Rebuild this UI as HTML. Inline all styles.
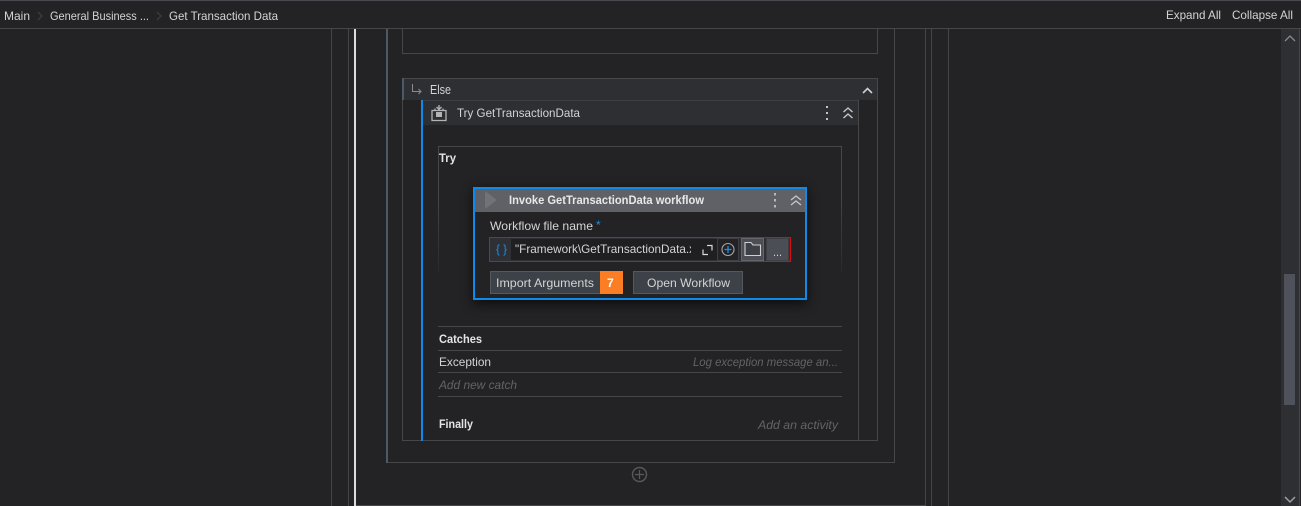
<!DOCTYPE html>
<html><head><meta charset="utf-8"><style>
html,body{margin:0;padding:0;background:#232325;width:1301px;height:506px;overflow:hidden}
svg{display:block}
text{font-family:"Liberation Sans",sans-serif;font-size:12px;fill:#d4d4d4}
.b{font-weight:bold;fill:#e4e4e4}
.i{font-style:italic;fill:#636366}
</style></head><body>
<svg width="1301" height="506" viewBox="0 0 1301 506" xmlns="http://www.w3.org/2000/svg">
<defs>
<linearGradient id="fl" x1="0" y1="146" x2="0" y2="272" gradientUnits="userSpaceOnUse"><stop offset="0" stop-color="#47474a"/><stop offset=".4" stop-color="#47474a"/><stop offset="1" stop-color="#29292b"/></linearGradient>
<filter id="sh" x="-10%" y="-20%" width="120%" height="140%"><feGaussianBlur stdDeviation="6"/></filter>
</defs>
<rect width="1301" height="506" fill="#232325"/>
<!-- top bar -->
<rect y="0" width="1301" height="1" fill="#494a4f"/>
<rect y="28" width="1301" height="1" fill="#47474a"/>
<text x="4" y="20" textLength="26" lengthAdjust="spacingAndGlyphs">Main</text>
<path d="M38 12l4 4-4 4" fill="none" stroke="#3a3a3d" stroke-width="1.5"/>
<text x="50" y="20" textLength="99" lengthAdjust="spacingAndGlyphs">General Business ...</text>
<path d="M157 12l4 4-4 4" fill="none" stroke="#3a3a3d" stroke-width="1.5"/>
<text x="169" y="20" textLength="109" lengthAdjust="spacingAndGlyphs">Get Transaction Data</text>
<text x="1166" y="19" textLength="55" lengthAdjust="spacingAndGlyphs">Expand All</text>
<text x="1232" y="19" textLength="61" lengthAdjust="spacingAndGlyphs">Collapse All</text>
<!-- scrollbar -->
<rect x="1281" y="29" width="18" height="477" fill="#2e2f33"/>
<rect x="1299" y="29" width="1" height="477" fill="#47474a"/>
<rect x="1284" y="274" width="11" height="131" fill="#4f525a"/>
<path d="M1285 41l5-5 5 5" fill="none" stroke="#8a8a8c" stroke-width="1.3"/>
<path d="M1285 497l5 5 5-5" fill="none" stroke="#a0a0a2" stroke-width="1.5"/>
<!-- vertical rails -->
<rect x="331" y="29" width="1" height="477" fill="#454547"/>
<rect x="348" y="29" width="1" height="477" fill="#454547"/>
<rect x="354" y="29" width="2" height="477" fill="#dcdcdc"/>
<rect x="386" y="29" width="2" height="434" fill="#4a5a68"/>
<rect x="388" y="462" width="507" height="1" fill="#47474a"/>
<rect x="894" y="29" width="1" height="434" fill="#47474a"/>
<rect x="925" y="29" width="1" height="477" fill="#454547"/>
<rect x="931" y="29" width="1" height="477" fill="#454547"/>
<rect x="948" y="29" width="1" height="477" fill="#454547"/>
<rect x="356" y="505" width="570" height="1" fill="#4a4a4c"/>
<!-- upper box -->
<rect x="402" y="29" width="1" height="25" fill="#47474a"/>
<rect x="877" y="29" width="1" height="25" fill="#47474a"/>
<rect x="402" y="53" width="476" height="1" fill="#47474a"/>
<!-- else -->
<rect x="402" y="78" width="476" height="22" fill="#2e2f33"/>
<rect x="402" y="78" width="476" height="1" fill="#47474a"/>
<rect x="402" y="78" width="2" height="22" fill="#4a5a68"/>
<rect x="402" y="100" width="1" height="341" fill="#47474a"/>
<rect x="877" y="78" width="1" height="363" fill="#47474a"/>
<rect x="402" y="440" width="476" height="1" fill="#47474a"/>
<path d="M412.5 84v7.5h8M418.5 89l2.5 2.500-2.500 2.500" fill="none" stroke="#8c8c8e" stroke-width="1"/>
<text x="430" y="94" textLength="21" lengthAdjust="spacingAndGlyphs" style="font-size:12.500px">Else</text>
<path d="M863 93l4.500-4.500 4.500 4.500" fill="none" stroke="#d0d0d0" stroke-width="1.600"/>
<!-- try activity -->
<rect x="421" y="100" width="438" height="25" fill="#2e2f33"/>
<rect x="421" y="100" width="438" height="1" fill="#3e3e41"/>
<rect x="858" y="100" width="1" height="341" fill="#47474a"/>
<rect x="421" y="100" width="2" height="341" fill="#0f8ae8"/>
<path d="M432 110.500h14v10h-14zM435 110.500v-2M443 110.500v-2M439 105v5M436.500 107l2.500 2.500 2.500-2.500" fill="none" stroke="#b4b4b6" stroke-width="1.300"/>
<rect x="436" y="112" width="6" height="5" fill="#b4b4b6"/>
<text x="457" y="117" textLength="123" lengthAdjust="spacingAndGlyphs">Try GetTransactionData</text>
<rect x="826" y="106" width="2" height="2" fill="#c4c4c6"/><rect x="826" y="112" width="2" height="2" fill="#c4c4c6"/><rect x="826" y="118" width="2" height="2" fill="#c4c4c6"/>
<path d="M843.500 112l4.500-4 4.500 4M843.500 118l4.500-4 4.500 4" fill="none" stroke="#c8c8ca" stroke-width="1.400"/>
<!-- try box -->
<rect x="438" y="146" width="404" height="1" fill="#47474a"/>
<rect x="438" y="146" width="1" height="126" fill="url(#fl)"/>
<rect x="841" y="146" width="1" height="126" fill="url(#fl)"/>
<text class="b" x="439" y="162" textLength="17" lengthAdjust="spacingAndGlyphs">Try</text>
<!-- lower sections -->
<rect x="438" y="326" width="404" height="1" fill="#47474a"/>
<text class="b" x="439" y="343" textLength="43" lengthAdjust="spacingAndGlyphs">Catches</text>
<rect x="438" y="350" width="404" height="1" fill="#47474a"/>
<text x="439" y="366" textLength="52" lengthAdjust="spacingAndGlyphs">Exception</text>
<text class="i" x="693" y="366" textLength="145" lengthAdjust="spacingAndGlyphs">Log exception message an...</text>
<rect x="438" y="372" width="404" height="1" fill="#47474a"/>
<text class="i" x="439" y="389" textLength="78" lengthAdjust="spacingAndGlyphs">Add new catch</text>
<rect x="438" y="396" width="404" height="1" fill="#47474a"/>
<text class="b" x="439" y="428" textLength="34" lengthAdjust="spacingAndGlyphs">Finally</text>
<text class="i" x="758" y="429" textLength="80" lengthAdjust="spacingAndGlyphs">Add an activity</text>
<!-- add circle -->
<circle cx="639.500" cy="474.500" r="7" fill="none" stroke="#59595b" stroke-width="1.400"/>
<path d="M635 474.500h9M639.500 470v9" stroke="#59595b" stroke-width="1.200"/>
<!-- invoke card -->
<rect x="473" y="190" width="334" height="114" fill="#000" opacity=".65" filter="url(#sh)"/>
<rect x="474" y="188" width="332" height="111" fill="#232325" stroke="#0f8ae8" stroke-width="2"/>
<rect x="475" y="189" width="330" height="23" fill="#5f6167"/>
<path d="M485 191l12 9-12 9z" fill="#707277"/>
<text x="509" y="204" textLength="195" lengthAdjust="spacingAndGlyphs" style="font-weight:bold;fill:#e8e8e8">Invoke GetTransactionData workflow</text>
<rect x="774" y="193" width="2" height="2.500" fill="#b8b8ba"/><rect x="774" y="199" width="2" height="2.500" fill="#b8b8ba"/><rect x="774" y="205" width="2" height="2.500" fill="#b8b8ba"/>
<path d="M791 200l5-4 5 4M791 205l5-4 5 4" fill="none" stroke="#c4c4c6" stroke-width="1.400"/>
<text x="490" y="230" textLength="103" lengthAdjust="spacingAndGlyphs">Workflow file name</text>
<text x="596" y="229" style="fill:#1b8fe6">*</text>
<!-- input -->
<rect x="490" y="238" width="300" height="23" fill="#2e3035"/>
<rect x="511" y="239" width="206" height="21" fill="#1f1f21"/>
<text x="496" y="253" textLength="11" lengthAdjust="spacingAndGlyphs" style="fill:#1b8fe6">{ }</text>
<text x="515" y="253" textLength="180" lengthAdjust="spacingAndGlyphs">"Framework\GetTransactionData.x</text>
<rect x="691" y="240" width="9" height="18" fill="#1f1f21"/>
<path d="M703 249.500v5h5M707 245.500h5v5" fill="none" stroke="#d8d8d8" stroke-width="1.200"/>
<rect x="717.500" y="238.500" width="21" height="22" fill="#232325" stroke="#3d3f44"/>
<circle cx="728" cy="249.500" r="6" fill="none" stroke="#a8a8aa" stroke-width="1.100"/>
<path d="M724.500 249.500h7M728 246v7" stroke="#1b8fe6" stroke-width="1.300"/>
<rect x="741.500" y="238.500" width="22" height="22" fill="#4b4e55" stroke="#63656b"/>
<path d="M745 245v-2.500h6l2 2.500h7.500v10.500H745z" fill="#3d4046" stroke="#d0d0d2" stroke-width="1.100"/>
<rect x="766.500" y="238.500" width="22" height="22" fill="#4b4e55" stroke="#3d3f44"/>
<text x="773" y="256" textLength="9" lengthAdjust="spacingAndGlyphs">...</text>
<rect x="489.500" y="237.500" width="301" height="24" fill="none" stroke="#d60f14" stroke-width="1"/>
<!-- buttons -->
<rect x="490.500" y="271.500" width="110" height="22" fill="#3d4148" stroke="#55585e"/>
<text x="496" y="287" textLength="98" lengthAdjust="spacingAndGlyphs">Import Arguments</text>
<rect x="600" y="271" width="23" height="23" fill="#fb7d24"/>
<text x="607" y="287" style="font-weight:bold;fill:#fff;font-size:12px">7</text>
<rect x="633.500" y="271.500" width="109" height="22" fill="#3d4148" stroke="#55585e"/>
<text x="647" y="287" textLength="83" lengthAdjust="spacingAndGlyphs">Open Workflow</text>
</svg>
</body></html>
